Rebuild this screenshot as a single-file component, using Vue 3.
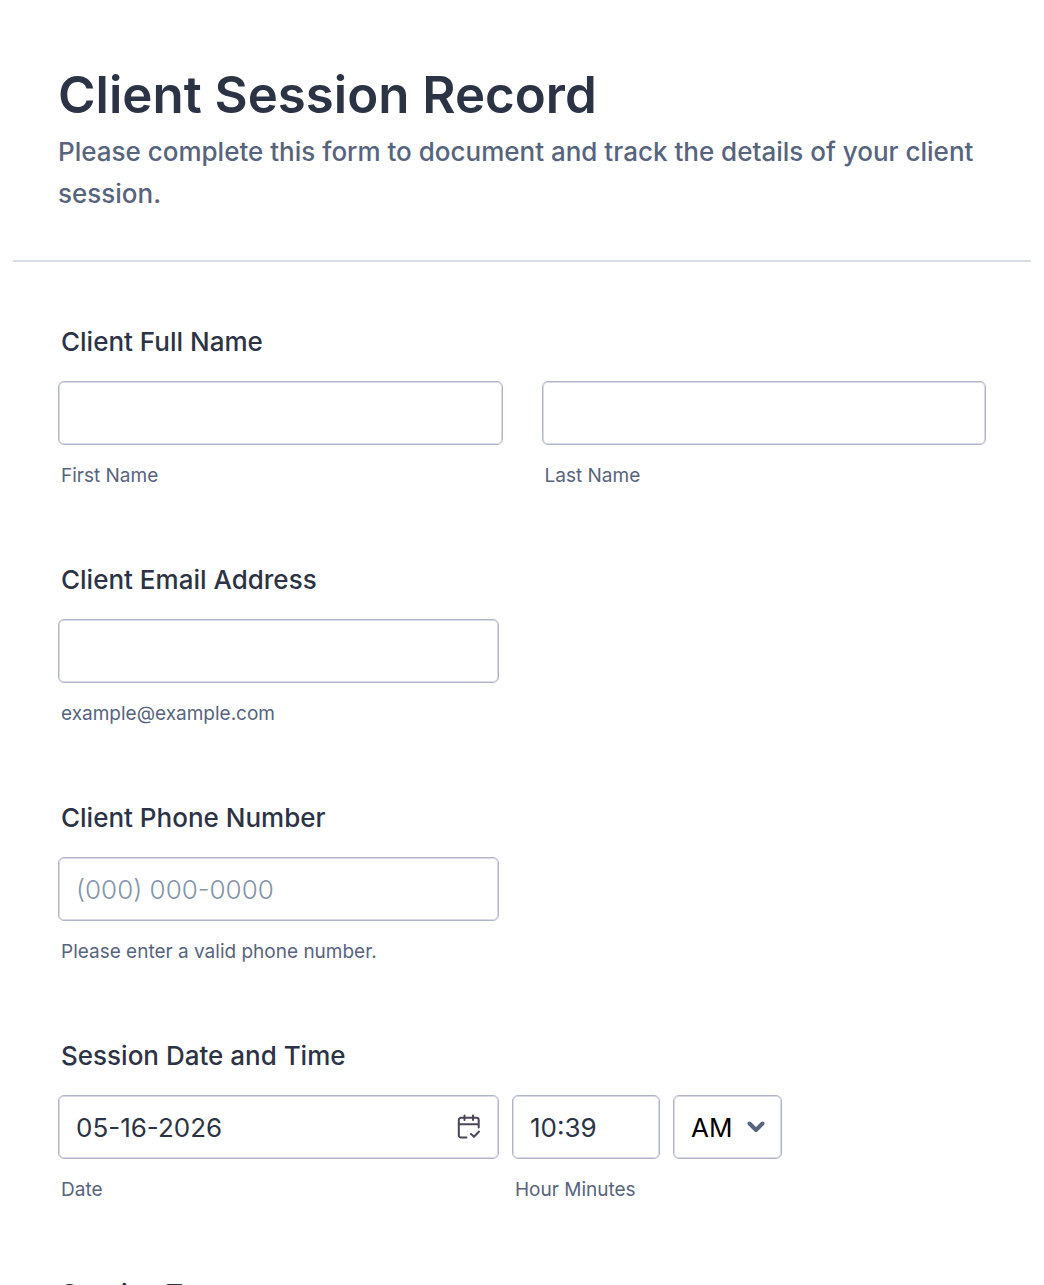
<template>
  <form class="form-page" @submit.prevent>
    <header class="form-header">
      <h1>Client Session Record</h1>
      <p>Please complete this form to document and track the details of your client session.</p>
    </header>

    <fieldset class="question">
      <legend>Client Full Name</legend>
      <div class="name-row">
        <div class="field">
          <input id="first-name" v-model="form.firstName" type="text" />
          <label for="first-name">First Name</label>
        </div>
        <div class="field">
          <input id="last-name" v-model="form.lastName" type="text" />
          <label for="last-name">Last Name</label>
        </div>
      </div>
    </fieldset>

    <fieldset v-for="item in contacts" :key="item.id" class="question">
      <legend>{{ item.title }}</legend>
      <div class="field half">
        <input
          :id="item.id"
          v-model="form[item.id]"
          :type="item.type"
          :placeholder="item.placeholder"
        />
        <label :for="item.id">{{ item.hint }}</label>
      </div>
    </fieldset>

    <fieldset class="question">
      <legend>Session Date and Time</legend>
      <div class="time-row">
        <div class="field half">
          <div class="date-box">
            <input id="session-date" v-model="form.date" type="text" />
            <button type="button" class="calendar" aria-label="Choose date">
              <svg width="24" height="26" viewBox="0 0 24 26" aria-hidden="true">
                <path
                  d="M9.500 23.500H4A2.200 2.200 0 0 1 1.800 21.300V6A2.200 2.200 0 0 1 4 3.800H19.500A2.200 2.200 0 0 1 21.700 6V13.500M1.800 10.200H21.700M7.500 1.500V6M16 1.500V6M14 20L17 22.700L22 17.500"
                />
              </svg>
            </button>
          </div>
          <label for="session-date">Date</label>
        </div>
        <div class="field hour">
          <input id="session-time" v-model="form.time" type="text" />
          <label for="session-time">Hour Minutes</label>
        </div>
        <div class="period">
          <select v-model="form.period" aria-label="AM or PM">
            <option>AM</option>
            <option>PM</option>
          </select>
          <svg width="18" height="12" viewBox="0 0 18 12" aria-hidden="true">
            <path d="M2.500 2.500 9 9l6.500-6.500" />
          </svg>
        </div>
      </div>
    </fieldset>

    <fieldset class="question">
      <legend>Session Type</legend>
    </fieldset>
  </form>
</template>

<script setup>
import { reactive } from 'vue'

const form = reactive({
  firstName: '',
  lastName: '',
  email: '',
  phone: '',
  date: '05-16-2026',
  time: '10:39',
  period: 'AM',
})

const contacts = [
  {
    id: 'email',
    title: 'Client Email Address',
    type: 'email',
    placeholder: '',
    hint: 'example@example.com',
  },
  {
    id: 'phone',
    title: 'Client Phone Number',
    type: 'tel',
    placeholder: '(000) 000-0000',
    hint: 'Please enter a valid phone number.',
  },
]
</script>

<style>
html,
body {
  height: 100%;
  margin: 0;
  overflow: hidden;
  background: #fff;
}

#app {
  height: 100%;
  overflow: hidden;
}
</style>

<style scoped>
.form-page {
  padding: 0 13px;
  font-family: Inter, sans-serif;
  color: #2c3345;
}

.form-header {
  padding: 64px 45px 45px;
  border-bottom: 2px solid #d9dbe5;
}

h1 {
  margin: 0;
  font-size: 51px;
  line-height: 61px;
  font-weight: 600;
}

.form-header p {
  margin: 6px 0 0;
  font-size: 26px;
  line-height: 42px;
  font-weight: 500;
  color: #57647e;
}

.question {
  min-width: 0;
  margin: 0;
  padding: 64px 45px 0;
  border: 0;
}

.question + .question {
  padding-top: 75px;
}

legend {
  float: left;
  width: 100%;
  padding: 0 3px;
  margin-bottom: 23px;
  font-size: 26px;
  line-height: 32px;
  font-weight: 500;
  box-sizing: border-box;
}

.name-row,
.time-row {
  display: flex;
  align-items: flex-start;
  clear: both;
}

.name-row {
  gap: 39px;
}

.name-row .field {
  flex: 1;
}

.time-row {
  gap: 13px;
}

.field {
  clear: both;
  min-width: 0;
}

.half {
  width: calc(50% - 23px);
}

.hour {
  width: 148px;
}

input,
select {
  display: block;
  width: 100%;
  height: 64px;
  margin: 0;
  padding: 0 17px;
  border: 1px solid #b0b5c6;
  border-radius: 6px;
  box-shadow: inset 0 0 0 1px #d8dbe5;
  background: #fff;
  font-family: inherit;
  font-size: 26px;
  color: #2c3345;
  box-sizing: border-box;
  outline: none;
}

input::placeholder {
  color: #8494ab;
  font-weight: 300;
  opacity: 1;
}

.field label {
  display: block;
  margin-top: 18px;
  padding: 0 3px;
  font-size: 19px;
  line-height: 26px;
  color: #57647e;
}

.date-box,
.period {
  position: relative;
}

.calendar {
  position: absolute;
  top: 16px;
  right: 14px;
  width: 32px;
  height: 32px;
  padding: 0;
  border: 0;
  background: none;
  cursor: pointer;
}

svg {
  fill: none;
  stroke: #4c4458;
  stroke-width: 2;
  stroke-linecap: round;
  stroke-linejoin: round;
}

.calendar svg {
  display: block;
  margin: 3px 4px;
}

.period {
  width: 109px;
}

.period select {
  color: #000;
  appearance: none;
}

.period svg {
  position: absolute;
  top: 26px;
  right: 17px;
  stroke: #57647e;
  stroke-width: 4;
  pointer-events: none;
}
</style>
